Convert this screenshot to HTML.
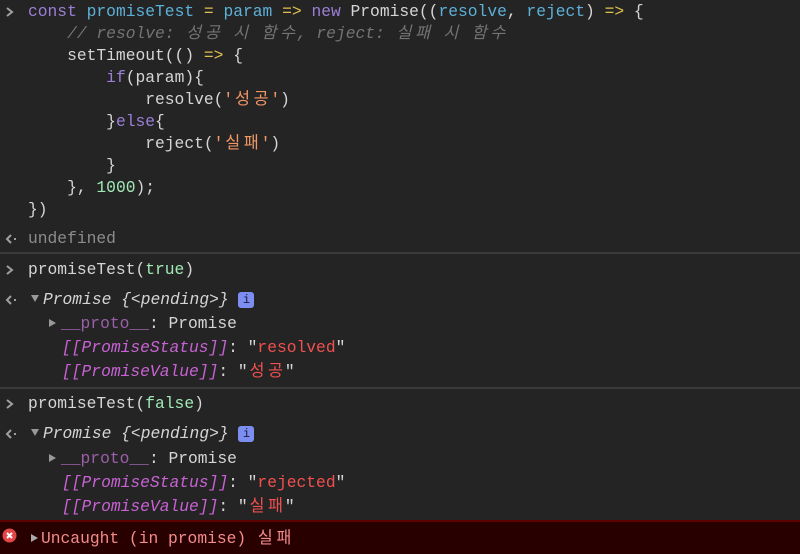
<!DOCTYPE html>
<html><head><meta charset="utf-8"><style>
body{margin:0;width:800px;height:552px;background:#242424;overflow:hidden;position:relative;font-family:"Liberation Mono","Noto Sans CJK KR",monospace;font-size:16.3px;color:#d5d5d5}
.l{position:absolute;left:28px;height:22px;line-height:22px;white-space:pre}
.kw{color:#9a7fd5}.id{color:#5db0d7}.op{color:#e0c050}.cm{color:#747474;font-style:italic}
.st{color:#f29766}.nu{color:#a1e8b5}.gr{color:#8c8c8c}.pp{color:#c862d4;font-style:italic}.rs{color:#f05050}
.it{font-style:italic}.k{letter-spacing:3.6px;margin-left:1.8px;margin-right:-1.8px}
.sep{position:absolute;left:0;width:800px;height:2px;background:#3a3a3a}
.pr{position:absolute;left:4px}
.tri{display:inline-block;width:0;height:0;vertical-align:2px;margin-right:4px}
.td{border-left:4px solid transparent;border-right:4px solid transparent;border-top:7px solid #999;margin-left:2px}
.tr{border-top:4px solid transparent;border-bottom:4px solid transparent;border-left:7px solid #999;vertical-align:1px;margin-right:5px}
.ib{display:inline-block;width:16px;height:16px;background:#7c8ef0;border-radius:3px;color:#1a1a40;font-size:12px;line-height:16px;text-align:center;vertical-align:1px}
</style></head><body>
<svg class="pr" style="top:6px" width="12" height="12"><path d="M3 2 L8 6 L3 10" stroke="#a0a0a0" stroke-width="2" fill="none"/></svg>
<div class="l" style="top:1px"><span class="kw">const</span> <span class="id">promiseTest</span> <span class="op">=</span> <span class="id">param</span> <span class="op">=&gt;</span> <span class="kw">new</span> Promise((<span class="id">resolve</span>, <span class="id">reject</span>) <span class="op">=&gt;</span> {</div>
<div class="l" style="top:23px">    <span class="cm">// resolve: <span class="k">성공</span> <span class="k">시</span> <span class="k">함수</span>, reject: <span class="k">실패</span> <span class="k">시</span> <span class="k">함수</span></span></div>
<div class="l" style="top:45px">    setTimeout(() <span class="op">=&gt;</span> {</div>
<div class="l" style="top:67px">        <span class="kw">if</span>(param){</div>
<div class="l" style="top:89px">            resolve(<span class="st">'<span class="k">성공</span>'</span>)</div>
<div class="l" style="top:111px">        }<span class="kw">else</span>{</div>
<div class="l" style="top:133px">            reject(<span class="st">'<span class="k">실패</span>'</span>)</div>
<div class="l" style="top:155px">        }</div>
<div class="l" style="top:177px">    }, <span class="nu">1000</span>);</div>
<div class="l" style="top:199px">})</div>
<svg class="pr" style="top:233px" width="14" height="12"><path d="M7 2 L3 6 L7 10" stroke="#a0a0a0" stroke-width="2" fill="none"/><rect x="10" y="5" width="2" height="2" fill="#a0a0a0"/></svg>
<div class="l gr" style="top:228px">undefined</div>
<div class="sep" style="top:252px"></div>
<svg class="pr" style="top:264px" width="12" height="12"><path d="M3 2 L8 6 L3 10" stroke="#a0a0a0" stroke-width="2" fill="none"/></svg>
<div class="l" style="top:259px">promiseTest(<span class="nu">true</span>)</div>
<svg class="pr" style="top:294px" width="14" height="12"><path d="M7 2 L3 6 L7 10" stroke="#a0a0a0" stroke-width="2" fill="none"/><rect x="10" y="5" width="2" height="2" fill="#a0a0a0"/></svg>
<div class="l" style="top:289px;left:29px"><span class="tri td"></span><span class="it">Promise {&lt;pending&gt;}</span> <span class="ib">i</span></div>
<div class="l" style="top:313px;left:49px"><span class="tri tr"></span><span style="color:#9a5fa8">__proto__</span>: Promise</div>
<div class="l" style="top:337px;left:62px"><span class="pp">[[PromiseStatus]]</span>: "<span class="rs">resolved</span>"</div>
<div class="l" style="top:361px;left:62px"><span class="pp">[[PromiseValue]]</span>: "<span class="rs k">성공</span>"</div>
<div class="sep" style="top:387px"></div>
<svg class="pr" style="top:398px" width="12" height="12"><path d="M3 2 L8 6 L3 10" stroke="#a0a0a0" stroke-width="2" fill="none"/></svg>
<div class="l" style="top:393px">promiseTest(<span class="nu">false</span>)</div>
<svg class="pr" style="top:428px" width="14" height="12"><path d="M7 2 L3 6 L7 10" stroke="#a0a0a0" stroke-width="2" fill="none"/><rect x="10" y="5" width="2" height="2" fill="#a0a0a0"/></svg>
<div class="l" style="top:423px;left:29px"><span class="tri td"></span><span class="it">Promise {&lt;pending&gt;}</span> <span class="ib">i</span></div>
<div class="l" style="top:448px;left:49px"><span class="tri tr"></span><span style="color:#9a5fa8">__proto__</span>: Promise</div>
<div class="l" style="top:472px;left:62px"><span class="pp">[[PromiseStatus]]</span>: "<span class="rs">rejected</span>"</div>
<div class="l" style="top:496px;left:62px"><span class="pp">[[PromiseValue]]</span>: "<span class="rs k">실패</span>"</div>
<div style="position:absolute;left:0;top:520px;width:800px;height:32px;background:#290000;border-top:2px solid #5c0000"></div>
<svg style="position:absolute;left:2px;top:528px" width="15" height="15"><circle cx="7.5" cy="7.5" r="7" fill="#e04646"/><path d="M5 5 L10 10 M10 5 L5 10" stroke="#fff" stroke-width="2"/></svg>
<div class="l" style="top:528px;left:31px;color:#f28b8b"><span class="tri tr" style="border-left-color:#aaa;margin-right:3px"></span>Uncaught (in promise) <span class="k">실패</span></div>
</body></html>
